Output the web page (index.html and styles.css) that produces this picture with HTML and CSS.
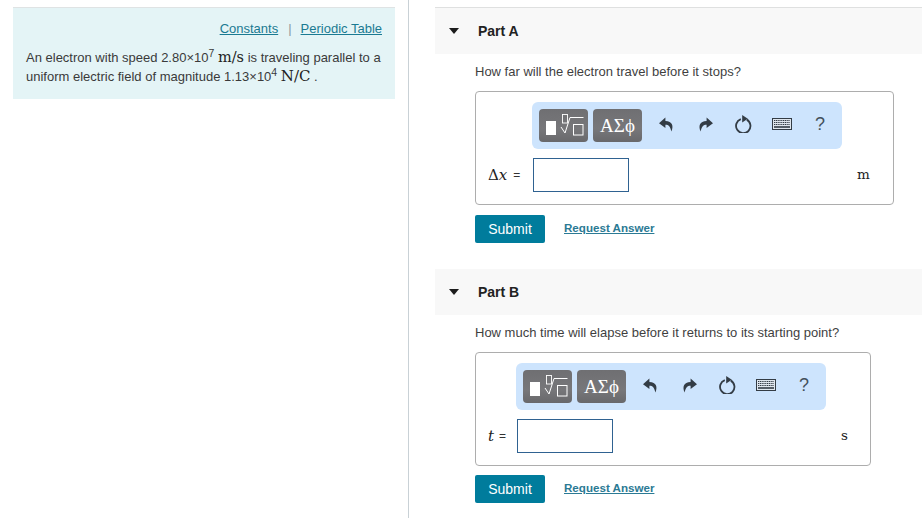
FILE: index.html
```html
<!DOCTYPE html>
<html lang="en">
<head>
<meta charset="utf-8">
<title>Electron in a uniform electric field</title>
<link rel="stylesheet" href="styles.css">
</head>
<body>
<svg class="defs" width="0" height="0" aria-hidden="true">
  <symbol id="undo" viewBox="0 0 15 15"><path d="M6.4 .6 0 6.2 6.4 11V7.7C9.4 7.6 11.4 9.4 12.4 14.6 14.8 8.8 13.4 4 6.4 3.9Z"/></symbol>
  <symbol id="redo" viewBox="0 0 15 15"><path d="M8.6 .6 15 6.2 8.6 11V7.7C5.6 7.6 3.6 9.4 2.6 14.6 .2 8.8 1.6 4 8.6 3.9Z"/></symbol>
  <symbol id="reset" viewBox="0 0 18 18"><path d="M6.8 4.1A7.2 7.2 0 1 0 12.8 4.6" fill="none" stroke="currentColor" stroke-width="1.8"/><path d="M8.2 0 13.8 3.7 8.2 7.4Z"/></symbol>
  <symbol id="kbd" viewBox="0 0 20 12"><rect x=".5" y=".5" width="19" height="11" fill="#dfe6ee" stroke="currentColor"/><path d="M2 2.5h16M2 4.5h16M2 6.5h16" stroke="currentColor" stroke-dasharray="1.2 .6" fill="none"/><path d="M2 9h16" stroke="currentColor" stroke-width="1.6" fill="none"/></symbol>
  <symbol id="templates" viewBox="0 0 49 33">
    <rect x="7" y="12" width="10" height="14" fill="#fff"/>
    <rect x="23.5" y="5.5" width="5" height="8.5" fill="none" stroke="#fff" stroke-width=".9"/>
    <path d="M22 18 26 24 31 8.5H44.5" fill="none" stroke="#fff" stroke-width="1"/>
    <rect x="34.5" y="15.5" width="9.5" height="10.5" fill="none" stroke="#fff" stroke-width="1"/>
  </symbol>
</svg>
<div class="page">
  <aside class="side">
    <section class="intro">
      <p class="links"><a href="#">Constants</a><span class="sep">|</span><a href="#">Periodic Table</a></p>
      <p class="problem">An electron with speed 2.80×10<sup>7</sup> <span class="math">m/s</span> is traveling parallel to a uniform electric field of magnitude 1.13×10<sup>4</sup> <span class="math big">N/C</span> .</p>
    </section>
  </aside>
  <main class="parts">
    <section class="part">
      <header class="part-head"><span class="caret"></span><h2>Part A</h2></header>
      <div class="part-body">
        <p class="question">How far will the electron travel before it stops?</p>
        <div class="answer">
          <div class="label label-a"><span class="math">Δ<i>x</i></span> =</div>
          <div class="work">
            <div class="toolbar">
              <button class="tool tool-t" type="button"><svg width="49" height="33"><use href="#templates"/></svg></button>
              <button class="tool tool-s" type="button">ΑΣϕ</button>
              <span class="icons">
                <svg class="ic" width="15" height="15"><use href="#undo"/></svg>
                <svg class="ic" width="15" height="15"><use href="#redo"/></svg>
                <svg class="ic" width="18" height="18"><use href="#reset"/></svg>
                <svg class="ic" width="20" height="12"><use href="#kbd"/></svg>
                <span class="help">?</span>
              </span>
            </div>
            <div class="field"></div>
          </div>
          <div class="unit unit-m">m</div>
        </div>
        <div class="actions"><button class="submit" type="button">Submit</button><a class="request" href="#">Request Answer</a></div>
      </div>
    </section>
    <section class="part">
      <header class="part-head"><span class="caret"></span><h2>Part B</h2></header>
      <div class="part-body">
        <p class="question">How much time will elapse before it returns to its starting point?</p>
        <div class="answer">
          <div class="label label-b"><span class="math"><i>t</i></span> =</div>
          <div class="work">
            <div class="toolbar">
              <button class="tool tool-t" type="button"><svg width="49" height="33"><use href="#templates"/></svg></button>
              <button class="tool tool-s" type="button">ΑΣϕ</button>
              <span class="icons">
                <svg class="ic" width="15" height="15"><use href="#undo"/></svg>
                <svg class="ic" width="15" height="15"><use href="#redo"/></svg>
                <svg class="ic" width="18" height="18"><use href="#reset"/></svg>
                <svg class="ic" width="20" height="12"><use href="#kbd"/></svg>
                <span class="help">?</span>
              </span>
            </div>
            <div class="field"></div>
          </div>
          <div class="unit unit-s">s</div>
        </div>
        <div class="actions"><button class="submit" type="button">Submit</button><a class="request" href="#">Request Answer</a></div>
      </div>
    </section>
  </main>
</div>
</body>
</html>
```
FILE: styles.css
```css
* { box-sizing: border-box; }
html, body { margin: 0; height: 100%; overflow: hidden; background: #fff; }
body { font-family: "Liberation Sans", Arial, sans-serif; font-size: 13px; color: #333; }
p, h2 { margin: 0; }
.defs { position: absolute; }
.page { display: flex; height: 518px; }

.side { width: 409px; flex: none; padding: 7px 13px 0; border-right: 1px solid #c9d1d6; }
.intro { width: 382px; height: 92px; padding: 12px 13px 0; background: #e4f4f6; border-top: 1px solid #dfe3e4; }
.links { display: flex; justify-content: flex-end; line-height: 18px; }
.links a { color: #1a7a92; }
.sep { margin: 0 9px 0 10px; color: #8a9aa0; }
.problem { margin-top: 10px; line-height: 19px; color: #3a3a3a; }
.problem sup { font-size: 10.5px; line-height: 0; }
.math { font-family: "DejaVu Serif", "Liberation Serif", serif; font-size: 14.5px; color: #222; }
.big { font-size: 15px; }

.parts { flex: 1; min-width: 0; padding: 7px 0 0 26px; }
.part:first-child { border-top: 1px solid #dfe0e0; }
.part-head { display: flex; align-items: center; height: 46px; background: #f8f8f8; }
.caret { margin: 0 19px 0 14px; width: 0; height: 0; border: 5.5px solid transparent; border-top: 6px solid #1c1c1c; border-bottom: 0; }
h2 { font-size: 14px; font-weight: 700; color: #222; }
.part-body { padding: 10px 0 26px 40px; }
.question { line-height: 16px; color: #3f3f3f; }
.answer { display: flex; width: max-content; margin-top: 11px; padding: 10px 22px 12px 12px; border: 1px solid #adadad; border-radius: 4px; }
.label { display: flex; align-items: center; gap: 6px; height: 34px; margin-top: 56px; font-size: 12px; }
.label-a { width: 45px; }
.label-b { width: 29px; gap: 5px; }
.label .math { font-size: 15px; }
.work { display: flex; flex-direction: column; }
.toolbar { display: flex; align-items: center; width: 310px; height: 47px; margin-left: -1px; padding-left: 7px; background: #cde4fd; border-radius: 6px; }
.tool { height: 33px; padding: 0; border: 0; border-radius: 4px; background: linear-gradient(#6f6f72, #77777a 60%, #68686b); color: #fff; }
.tool svg { display: block; }
.tool-t { width: 49px; }
.tool-s { width: 49px; margin-left: 5px; font-family: "Liberation Serif", serif; font-size: 19px; }
.icons { display: flex; align-items: center; flex: 1; padding: 0 0 3px 17px; color: #333c45; fill: #333c45; }
.ic { flex: none; margin-right: 24px; }
.ic:nth-child(2) { margin-right: 21px; }
.ic:nth-child(3) { margin-right: 20px; }
.ic:nth-child(4) { margin-right: 23px; }
.help { font-size: 18px; line-height: 20px; color: #44505a; }
.field { width: 96px; height: 34px; margin-top: 9px; border: 1px solid #2f6291; background: #fff; }
.unit { margin: 64px 0 0 15px; font-family: "DejaVu Serif", "Liberation Serif", serif; font-size: 13.5px; line-height: 16px; color: #222; }
.unit-m { width: 14px; }
.unit-s { width: 7px; }
.actions { display: flex; align-items: flex-start; margin-top: 10px; }
.part:last-child .actions { margin-top: 9px; }
.submit { width: 70px; height: 28px; padding: 0; border: 0; border-radius: 2px; background: #007c9c; color: #fff; font: 14px "Liberation Sans", Arial, sans-serif; }
.request { margin: 5px 0 0 19px; font-size: 11.6px; font-weight: 700; line-height: 16px; color: #2b7a94; }
```
